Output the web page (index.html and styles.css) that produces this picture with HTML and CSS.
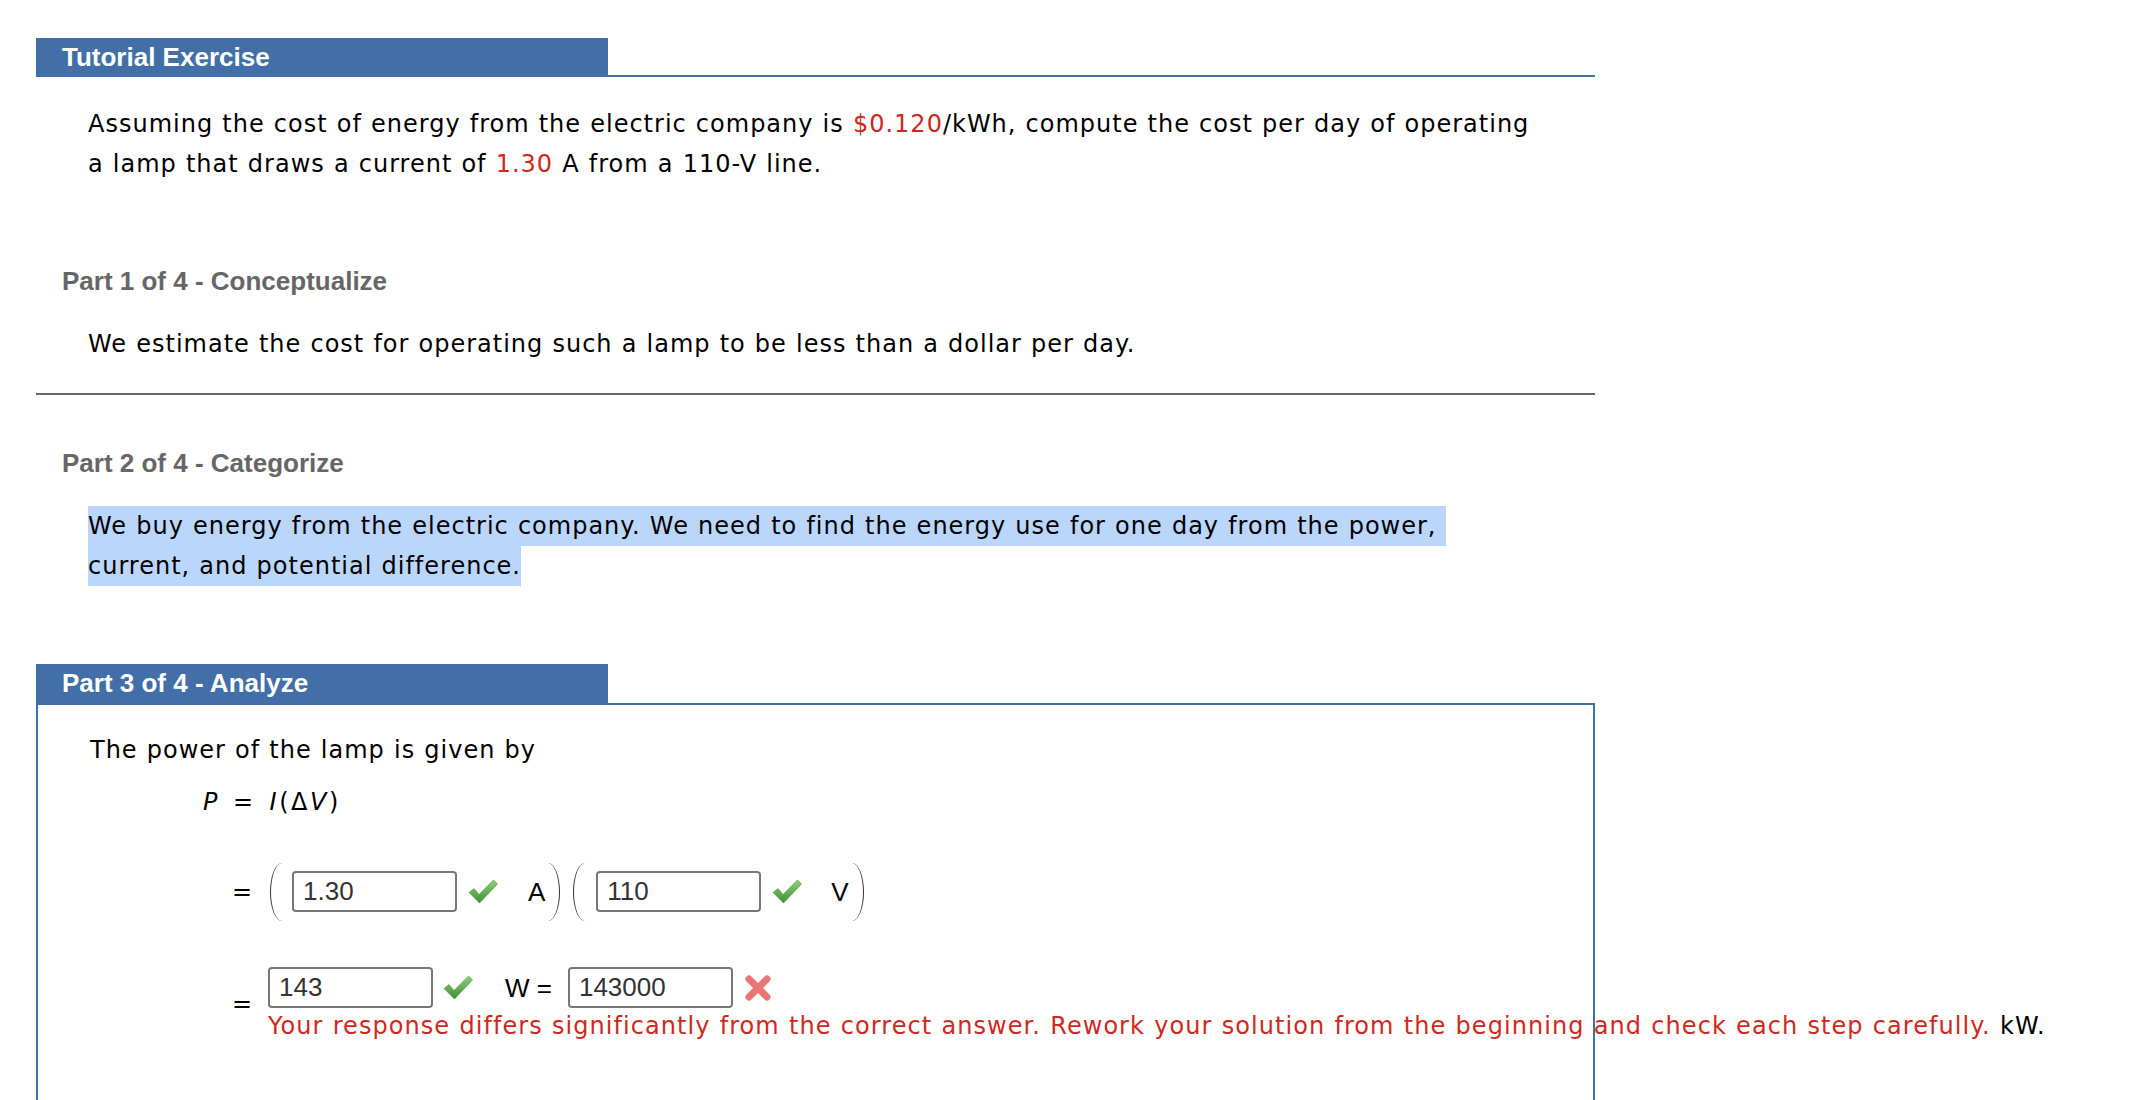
FILE: index.html
```html
<!DOCTYPE html>
<html lang="en">
<head>
<meta charset="utf-8">
<title>Tutorial Exercise</title>
<link rel="stylesheet" href="styles.css">
</head>
<body>
<div class="page">
  <div class="sec-head">
    <div class="tab">Tutorial Exercise</div>
    <div class="tab-rule"></div>
  </div>
  <p class="text intro">Assuming the cost of energy from the electric company is <span class="red">$0.120</span>/kWh, compute the cost per day of operating<br>a lamp that draws a current of <span class="red">1.30</span> A from a 110-V line.</p>

  <h3 class="part part-first">Part 1 of 4 - Conceptualize</h3>
  <p class="text after-part">We estimate the cost for operating such a lamp to be less than a dollar per day.</p>
  <div class="divider"></div>

  <h3 class="part part-second">Part 2 of 4 - Categorize</h3>
  <p class="text after-part"><span class="sel">We buy energy from the electric company. We need to find the energy use for one day from the power,&nbsp;<br>current, and potential difference.</span></p>

  <div class="tab tab-solo">Part 3 of 4 - Analyze</div>
  <div class="box">
    <p class="text">The power of the lamp is given by</p>
    <div class="formula"><i>P</i><span class="op">=</span><i>I</i>(Δ<i>V</i>)</div>

    <div class="row row1">
      <span class="eq">=</span>
      <span class="lparen p1"></span>
      <input class="ans in1" type="text" value="1.30" readonly>
      <svg class="icon-ok" width="30" height="25" viewBox="0 0 30 25"><defs><linearGradient id="ok1" x1="0" y1="0" x2="0" y2="1"><stop offset="0" stop-color="#8ed07b"/><stop offset="1" stop-color="#3e8f34"/></linearGradient></defs><path d="M1 13.5 L6 9.5 L11 15.5 L25.5 1 L29.5 5 L11.5 24 Z" fill="url(#ok1)" stroke="#4f9444" stroke-width="0.6" stroke-linejoin="round"/></svg>
      <span class="unit u-a">A</span>
      <span class="rparen p2"></span>
      <span class="lparen p3"></span>
      <input class="ans in2" type="text" value="110" readonly>
      <svg class="icon-ok" width="30" height="25" viewBox="0 0 30 25"><defs><linearGradient id="ok2" x1="0" y1="0" x2="0" y2="1"><stop offset="0" stop-color="#8ed07b"/><stop offset="1" stop-color="#3e8f34"/></linearGradient></defs><path d="M1 13.5 L6 9.5 L11 15.5 L25.5 1 L29.5 5 L11.5 24 Z" fill="url(#ok2)" stroke="#4f9444" stroke-width="0.6" stroke-linejoin="round"/></svg>
      <span class="unit u-v">V</span>
      <span class="rparen p4"></span>
    </div>

    <div class="row row2">
      <span class="eq">=</span>
      <div class="answer-block">
        <div class="answer-line">
          <input class="ans" type="text" value="143" readonly>
          <svg class="icon-ok ok3" width="30" height="25" viewBox="0 0 30 25"><defs><linearGradient id="ok3" x1="0" y1="0" x2="0" y2="1"><stop offset="0" stop-color="#8ed07b"/><stop offset="1" stop-color="#3e8f34"/></linearGradient></defs><path d="M1 13.5 L6 9.5 L11 15.5 L25.5 1 L29.5 5 L11.5 24 Z" fill="url(#ok3)" stroke="#4f9444" stroke-width="0.6" stroke-linejoin="round"/></svg>
          <span class="unit u-w">W =</span>
          <input class="ans in4" type="text" value="143000" readonly>
          <svg class="icon-bad" width="28" height="28" viewBox="0 0 28 28"><g stroke="#e86767" stroke-width="7" stroke-linecap="round"><line x1="5" y1="5" x2="23" y2="23"/><line x1="23" y1="5" x2="5" y2="23"/></g></svg>
        </div>
        <div class="error-line"><span class="red">Your response differs significantly from the correct answer. Rework your solution from the beginning and check each step carefully.</span> kW.</div>
      </div>
    </div>
  </div>
</div>
</body>
</html>
```
FILE: styles.css
```css
body {
  margin: 0;
  background: #fff;
  color: #000;
  font-family: "DejaVu Sans", Verdana, sans-serif;
}

.page {
  width: 1559px;
  padding: 38px 0 0 36px;
}

.sec-head {
  display: flex;
  align-items: flex-end;
}

.tab {
  width: 546px;
  height: 39px;
  padding-left: 26px;
  background: #426fa7;
  color: #fff;
  font: bold 26px/39px "Liberation Sans", Arial, sans-serif;
}

.tab-rule {
  flex: 1;
  border-bottom: 2px solid #426fa7;
}

.text {
  margin: 0;
  padding-left: 52px;
  font-size: 24px;
  line-height: 40px;
  letter-spacing: 1px;
  word-spacing: 0.5px;
  white-space: nowrap;
}

.intro { margin-top: 27px; }

.red { color: #d0281d; }

.part {
  margin: 0;
  padding-left: 26px;
  color: #666;
  font: bold 26px/30px "Liberation Sans", Arial, sans-serif;
}

.part-first { margin-top: 82px; }
.part-second { margin-top: 53px; }

.after-part { margin-top: 28px; }

.divider {
  margin-top: 29px;
  border-top: 2px solid #666;
}

.sel {
  background: #bad6fb;
  padding: 6px 0;
  -webkit-box-decoration-break: clone;
  box-decoration-break: clone;
}

.tab-solo { margin-top: 78px; }

.box {
  border: 2px solid #426fa7;
  padding: 25px 0 140px;
}

.formula {
  margin-top: 12px;
  padding-left: 165px;
  font-size: 24px;
  line-height: 40px;
  letter-spacing: 2.5px;
}

.formula i { font-style: oblique; }
.formula .op { margin: 0 14px 0 13px; }

.row {
  display: flex;
  align-items: center;
  padding-left: 194px;
}

.row1 {
  margin-top: 39px;
  height: 61px;
}

.row2 {
  margin-top: 45px;
}

.eq {
  width: 20px;
  font-size: 24px;
  line-height: 30px;
}

.lparen,
.rparen {
  width: 12px;
  height: 58px;
  box-sizing: border-box;
}

.lparen {
  border-left: 1.6px solid #333;
  border-radius: 12px 0 0 12px / 29px 0 0 29px;
}

.rparen {
  border-right: 1.6px solid #333;
  border-radius: 0 12px 12px 0 / 0 29px 29px 0;
}

.ans {
  box-sizing: border-box;
  width: 165px;
  height: 41px;
  margin: 0;
  padding: 0 0 0 9px;
  border: 2px solid #777;
  border-radius: 4px;
  background: #fff;
  color: #333;
  font: 26px "Liberation Sans", Arial, sans-serif;
  outline: none;
}

.p1 { margin-left: 18px; }
.row .in1 { margin-left: 10px; }
.p2 { margin-left: 3px; }
.p3 { margin-left: 13px; }
.row .in2 { margin-left: 11px; }
.p4 { margin-left: 3px; }

.icon-ok {
  display: block;
  margin-left: 11px;
  flex: none;
}

.ok3 { margin-left: 10px; }

.icon-bad {
  display: block;
  margin-left: 11px;
  flex: none;
  opacity: 0.9;
}

.unit {
  font: 26px/30px "Liberation Sans", Arial, sans-serif;
  white-space: nowrap;
}

.u-a { margin-left: 30px; }
.u-v { margin-left: 29px; }
.u-w { margin-left: 32px; }
.row .in4 { margin-left: 16px; }

.answer-block {
  margin-left: 16px;
}

.answer-line {
  display: flex;
  align-items: center;
  height: 41px;
}

.error-line {
  margin-top: 3px;
  font-size: 24px;
  line-height: 30px;
  letter-spacing: 1.05px;
  word-spacing: 0.6px;
  white-space: nowrap;
}
```
